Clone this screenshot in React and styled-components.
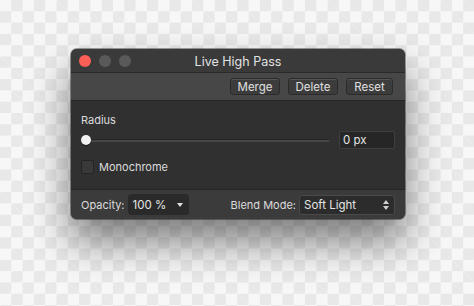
import React from 'react';
import styled, { createGlobalStyle } from 'styled-components';

const GlobalStyle = createGlobalStyle`
  html, body {
    margin: 0;
    padding: 0;
  }
  body {
    font-family: Inter, "Noto Sans", "Liberation Sans", sans-serif;
  }
`;

const Page = styled.div`
  width: 474px;
  height: 306px;
  box-sizing: border-box;
  padding: 49px 0 0 71px;
  overflow: hidden;
  background-color: #f7f7f7;
  background-image:
    linear-gradient(45deg, #e8e8e8 25%, transparent 25%, transparent 75%, #e8e8e8 75%),
    linear-gradient(45deg, #e8e8e8 25%, transparent 25%, transparent 75%, #e8e8e8 75%);
  background-size: 22.6px 22.6px;
  background-position: 0 0, 11.3px 11.3px;
`;

const Window = styled.div`
  width: 334px;
  height: 170px;
  display: flex;
  flex-direction: column;
  border-radius: 6px;
  overflow: hidden;
  background: #303030;
  box-shadow: 0 0 0 1px rgba(0, 0, 0, 0.35), 0 22px 40px rgba(0, 0, 0, 0.5);
  color: #dedede;
  font-size: 11px;
`;

const TitleBar = styled.div`
  height: 23px;
  flex: none;
  display: flex;
  align-items: center;
  position: relative;
  background: #3a3a3a;
  padding: 1px 0 0 8px;
  box-sizing: border-box;
  gap: 8px;
`;

const Light = styled.span`
  width: 12px;
  height: 12px;
  border-radius: 50%;
  background: ${(p) => p.color};
`;

const Title = styled.div`
  position: absolute;
  left: 0;
  right: 0;
  top: 5px;
  text-align: center;
  font-size: 12.5px;
  color: #e2e2e2;
  pointer-events: none;
`;

const Toolbar = styled.div`
  height: 29px;
  flex: none;
  display: flex;
  align-items: center;
  justify-content: flex-end;
  gap: 8px;
  padding-right: 12px;
  background: #474747;
  border-top: 1px solid #2a2a2a;
  border-bottom: 1px solid #262626;
  box-sizing: border-box;
`;

const Button = styled.div`
  width: ${(p) => p.w}px;
  height: 17px;
  box-sizing: border-box;
  display: flex;
  align-items: center;
  justify-content: center;
  border-radius: 3px;
  background: #3c3c3c;
  border: 1px solid #2b2b2b;
  box-shadow: inset 0 1px 0 #555;
  font-size: 11.5px;
  color: #e0e0e0;
`;

const Content = styled.div`
  flex: 1;
  display: flex;
  flex-direction: column;
  padding: 12px 10px 0 10px;
  background: #303030;
`;

const Label = styled.div`
  font-size: 11px;
  color: #dcdcdc;
`;

const SliderRow = styled.div`
  display: flex;
  align-items: center;
  margin-top: 4px;
  height: 18px;
`;

const Track = styled.div`
  position: relative;
  width: 248px;
  height: 3px;
  margin-left: 1px;
  border-radius: 2px;
  background: #474747;
  box-shadow: inset 0 1px 0 #262626;
`;

const Knob = styled.span`
  position: absolute;
  left: -1px;
  top: -4px;
  width: 10px;
  height: 10px;
  border-radius: 50%;
  background: #f2f2f2;
  box-shadow: 0 1px 1px rgba(0, 0, 0, 0.5);
`;

const ValueBox = styled.div`
  margin-left: 9px;
  width: 56px;
  height: 18px;
  box-sizing: border-box;
  border: 1px solid #3e3e3e;
  background: #262626;
  border-radius: 2px;
  display: flex;
  align-items: center;
  padding-left: 3px;
  font-size: 11.5px;
  color: #e6e6e6;
`;

const CheckRow = styled.label`
  display: flex;
  align-items: center;
  gap: 5px;
  margin-top: 11px;
`;

const Box = styled.span`
  width: 13px;
  height: 14px;
  box-sizing: border-box;
  border: 1px solid #242424;
  background: #393939;
  border-radius: 2px;
`;

const BottomBar = styled.div`
  height: 30px;
  flex: none;
  box-sizing: border-box;
  display: flex;
  align-items: center;
  padding: 0 10px;
  background: #3b3b3b;
  border-top: 1px solid #262626;
`;

const Select = styled.div`
  width: ${(p) => p.w}px;
  height: ${(p) => p.h}px;
  box-sizing: border-box;
  margin-left: 3px;
  display: flex;
  align-items: center;
  justify-content: space-between;
  padding: 0 5px 0 4px;
  border-radius: 3px;
  background: ${(p) => (p.outlined ? '#2c2c2c' : '#2a2a2a')};
  border: 1px solid ${(p) => (p.outlined ? '#4a4a4a' : '#2a2a2a')};
  font-size: 11.5px;
  color: #e6e6e6;
`;

const Spacer = styled.div`
  flex: 1;
`;

const Arrow = styled.svg`
  display: block;
`;

export default function App() {
  return (
    <Page>
      <GlobalStyle />
      <Window>
        <TitleBar>
          <Light color="#fe5f57" />
          <Light color="#5a5a5a" />
          <Light color="#5a5a5a" />
          <Title>Live High Pass</Title>
        </TitleBar>
        <Toolbar>
          <Button w={50}>Merge</Button>
          <Button w={50}>Delete</Button>
          <Button w={47}>Reset</Button>
        </Toolbar>
        <Content>
          <Label>Radius</Label>
          <SliderRow>
            <Track>
              <Knob />
            </Track>
            <ValueBox>0 px</ValueBox>
          </SliderRow>
          <CheckRow>
            <Box />
            <Label>Monochrome</Label>
          </CheckRow>
        </Content>
        <BottomBar>
          <Label>Opacity:</Label>
          <Select w={61} h={21}>
            <span>100 %</span>
            <Arrow width="6" height="4" viewBox="0 0 6 4">
              <path d="M0 0 L6 0 L3 4 Z" fill="#e0e0e0" />
            </Arrow>
          </Select>
          <Spacer />
          <Label>Blend Mode:</Label>
          <Select w={96} h={20} outlined>
            <span>Soft Light</span>
            <Arrow width="6" height="10" viewBox="0 0 6 10">
              <path d="M0 4 L6 4 L3 0 Z M0 6 L6 6 L3 10 Z" fill="#d0d0d0" />
            </Arrow>
          </Select>
        </BottomBar>
      </Window>
    </Page>
  );
}
